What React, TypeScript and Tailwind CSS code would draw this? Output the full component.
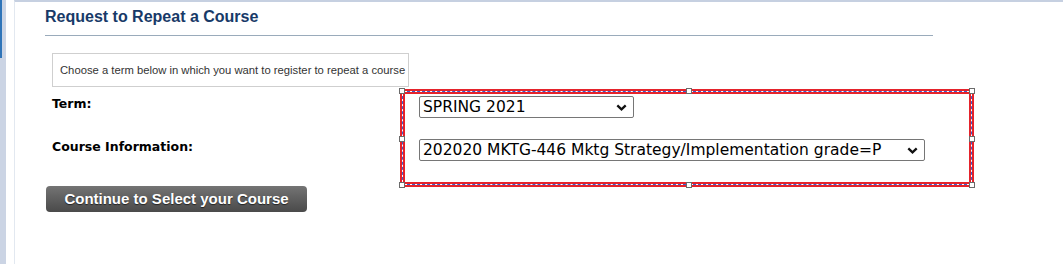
import React from "react";

function Handle({ className }: { className: string }) {
  return (
    <span
      className={`absolute w-[6px] h-[6px] bg-white border border-[#6b6b6b] ${className}`}
    />
  );
}

function Select({ value, width }: { value: string; width: string }) {
  return (
    <div className={`relative ${width}`}>
      <select className="block h-[22px] w-full appearance-none rounded-[2px] border border-[#767676] bg-white pl-[3px] font-['DejaVu_Sans',Verdana,sans-serif] text-[15.5px] leading-[20px] text-black">
        <option>{value}</option>
      </select>
      <svg
        className="pointer-events-none absolute right-[7px] top-[8px]"
        width="11"
        height="7"
        viewBox="0 0 11 7"
      >
        <path d="M1.3 1.3 L5.5 5.3 L9.7 1.3" fill="none" stroke="#111" strokeWidth="2.3" />
      </svg>
    </div>
  );
}

export default function App() {
  return (
    <div className="relative flex h-[264px] w-full bg-white font-['Liberation_Sans',Arial,sans-serif]">
      {/* left frame strip */}
      <div className="relative w-[6px] bg-[#cbd4e4]">
        <div className="absolute left-0 top-0 h-[58px] w-[2px] bg-[#2f74b8]" />
      </div>
      <div className="ml-[8px] flex-1 border-l border-[#e2e8f0] border-t-2 border-t-[#c6d0e1]">
        <div className="pl-[30px] pt-[5px]">
          <h1 className="text-[16px] font-bold leading-[20px] text-[#183a68]">
            Request to Repeat a Course
          </h1>
          <div className="mt-[8px] h-px w-[888px] bg-[#9aabbb]" />

          <div className="ml-[7px] mt-[17px] flex h-[34px] w-[357px] items-center border border-[#cfcfcf] pl-[7px] text-[11.25px] text-[#333]">
            Choose a term below in which you want to register to repeat a course
          </div>

          <div className="mt-[2px] flex">
            <div className="w-[355px] pl-[7px] pt-[7px] font-['DejaVu_Sans',Verdana,sans-serif] text-[12.5px] font-bold leading-[16px] text-black">
              <div>Term:</div>
              <div className="mt-[27px]">Course Information:</div>
            </div>

            <div className="relative w-[574px] border-2 border-[#e5232b]">
              <div className="h-full border border-dashed border-[#3a5fcd] bg-white">
                <div className="flex h-full flex-col gap-[21px] border-2 border-[#e5232b] pl-[14px] pt-[2px] pb-[21px]">
                  <Select value="SPRING 2021" width="w-[215px]" />
                  <Select
                    value="202020 MKTG-446 Mktg Strategy/Implementation grade=P"
                    width="w-[506px]"
                  />
                </div>
              </div>
              <Handle className="-left-[3px] -top-[3px]" />
              <Handle className="left-[284px] -top-[3px]" />
              <Handle className="-right-[3px] -top-[3px]" />
              <Handle className="-left-[3px] top-[45px]" />
              <Handle className="-right-[3px] top-[45px]" />
              <Handle className="-left-[3px] -bottom-[3px]" />
              <Handle className="left-[284px] -bottom-[3px]" />
              <Handle className="-right-[3px] -bottom-[3px]" />
            </div>
          </div>

          <button className="-mt-[6px] ml-px h-[26px] w-[261px] rounded-[4px] bg-gradient-to-b from-[#747474] to-[#4a4a4a] text-[15px] font-bold text-white [text-shadow:0_1px_1px_rgba(0,0,0,0.6)]">
            Continue to Select your Course
          </button>
        </div>
      </div>
    </div>
  );
}
